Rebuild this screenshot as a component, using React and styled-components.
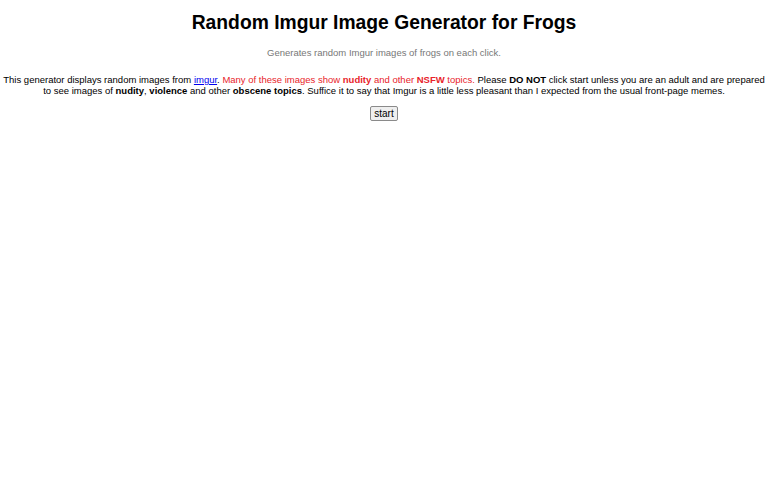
import React from 'react';
import styled, { createGlobalStyle } from 'styled-components';

const GlobalStyle = createGlobalStyle`
  body {
    margin: 0;
    background: #fff;
    font-family: "Liberation Sans", Arial, sans-serif;
    color: #000;
  }
`;

const Page = styled.div`
  text-align: center;
  padding-top: 11px;
`;

const Title = styled.h1`
  font-size: 19.3px;
  line-height: 24px;
  font-weight: bold;
  margin: 0;
`;

const Subtitle = styled.p`
  font-size: 9.5px;
  line-height: 12px;
  color: #777;
  margin: 12px 0 0;
`;

const Notice = styled.p`
  font-size: 9.5px;
  line-height: 11px;
  margin: 15px 0 0;
  padding: 0 1px;
`;

const Warn = styled.span`
  color: #e8232a;
`;

const Strong = styled.b`
  font-weight: bold;
`;

const Link = styled.a`
  color: #00e;
  text-decoration: underline;
`;

const StartButton = styled.button`
  margin-top: 10px;
  font-family: "Liberation Sans", Arial, sans-serif;
  font-size: 10px;
  line-height: 11px;
  padding: 1px 3px;
  background: #efefef;
  border: 1px solid #8a8a8a;
  border-radius: 2px;
  color: #000;
`;

export default function App() {
  return (
    <>
      <GlobalStyle />
      <Page>
        <Title>Random Imgur Image Generator for Frogs</Title>
        <Subtitle>Generates random Imgur images of frogs on each click.</Subtitle>
        <Notice>
          This generator displays random images from <Link href="#">imgur</Link>.{' '}
          <Warn>
            Many of these images show <Strong>nudity</Strong> and other <Strong>NSFW</Strong> topics.
          </Warn>{' '}
          Please <Strong>DO NOT</Strong> click start unless you are an adult and are prepared to see
          images of <Strong>nudity</Strong>, <Strong>violence</Strong> and other{' '}
          <Strong>obscene topics</Strong>. Suffice it to say that Imgur is a little less pleasant
          than I expected from the usual front-page memes.
        </Notice>
        <StartButton>start</StartButton>
      </Page>
    </>
  );
}
